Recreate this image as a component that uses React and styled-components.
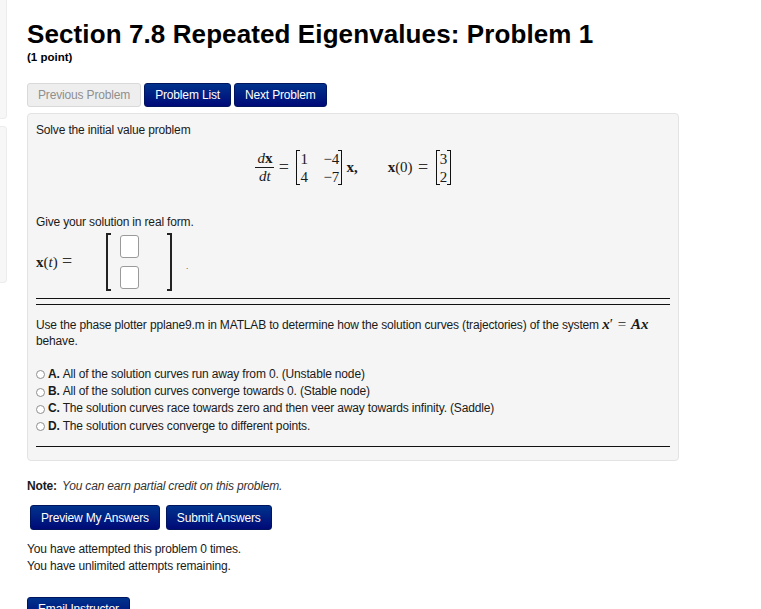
import React from "react";
import styled, { createGlobalStyle } from "styled-components";

const GlobalStyle = createGlobalStyle`
  html, body {
    margin: 0;
    padding: 0;
    height: 609px;
    overflow: hidden;
    background: #fff;
  }
  body {
    font-family: "Liberation Sans", Arial, sans-serif;
    font-size: 12px;
    letter-spacing: -0.16px;
    line-height: 17px;
    color: #1a1a1a;
  }
`;

const Page = styled.div`
  display: flex;
  align-items: flex-start;
`;

const Sidebar = styled.aside`
  width: 7px;
  flex: none;
  display: flex;
  flex-direction: column;
  gap: 7px;
  margin-top: -10px;
`;

const SideCard = styled.div`
  height: ${({ $h }) => $h}px;
  background: #f7f7f7;
  border: 1px solid #ececec;
  border-left: none;
  border-radius: 0 4px 4px 0;
  box-sizing: border-box;
`;

const Main = styled.main`
  width: 652px;
  margin-left: 20px;
  flex: none;
`;

const Title = styled.h1`
  margin: 19px 0 0;
  font-size: 26px;
  line-height: 30px;
  font-weight: 700;
  color: #000;
  letter-spacing: 0.1px;
`;

const Points = styled.div`
  margin-top: 1px;
  font-size: 11.5px;
  letter-spacing: 0;
  line-height: 15px;
  font-weight: 700;
  color: #000;
`;

const Nav = styled.div`
  display: flex;
  gap: 3px;
  margin-top: 18px;
`;

const Button = styled.button`
  height: 24px;
  padding: 0 10px;
  font-family: inherit;
  font-size: 12px;
  letter-spacing: inherit;
  line-height: 22px;
  color: #fff;
  background: linear-gradient(#00338c, #000a78);
  border: 1px solid #00155e;
  border-radius: 3px;
  box-sizing: border-box;
`;

const DisabledButton = styled(Button)`
  color: #8f8f8f;
  background: #eeeeee;
  border-color: #d9d9d9;
`;

const Well = styled.section`
  margin-top: 6px;
  height: 348px;
  box-sizing: border-box;
  padding: 8px 8px 0;
  background: #f5f5f5;
  border: 1px solid #e3e3e3;
  border-radius: 4px;
  display: flex;
  flex-direction: column;
`;

const Para = styled.p`
  margin: ${({ $top }) => $top || 0}px 0 0;
  line-height: ${({ $lh }) => $lh || 17}px;
`;

const InlineMath = styled.span`
  font-family: "Liberation Serif", "DejaVu Serif", serif;
  font-size: 15px;
  letter-spacing: 0;
  line-height: 0;
  word-spacing: 1px;
  color: #1a1a1a;
`;

const MathVar = styled.i`
  font-weight: 700;
`;

const Display = styled.div`
  margin-top: 10px;
  height: 36px;
  display: flex;
  align-items: center;
  justify-content: center;
  font-family: "Liberation Serif", "DejaVu Serif", serif;
  font-size: 15px;
  letter-spacing: 0;
  color: #1a1a1a;
`;

const Frac = styled.span`
  display: inline-flex;
  flex-direction: column;
  align-items: center;
  margin-right: 4px;
  line-height: 15px;
`;

const FracTop = styled.span`
  width: 19px;
  text-align: center;
  border-bottom: 1px solid #1a1a1a;
  padding-bottom: 1px;
`;

const FracBottom = styled.span`
  font-style: italic;
  padding-top: 1px;
`;

const Equals = styled.span`
  display: inline-block;
  width: 11px;
  margin-left: ${({ $left }) => $left || 0}px;
  font-size: 18px;
  line-height: 15px;
  text-align: center;
  color: #333;
`;

const Bracket = styled.span`
  display: inline-grid;
  grid-template-columns: ${({ $cols }) => $cols};
  row-gap: 4px;
  margin: 0 ${({ $right }) => $right || 0}px 0 7px;
  padding: 1px 2px 0 3px;
  line-height: 14px;
  border: 1px solid #111;
  box-sizing: border-box;
  border-image: linear-gradient(90deg, #111 0 4px, transparent 4px calc(100% - 4px), #111 calc(100% - 4px)) 1;
`;

const Cell = styled.span`
  text-align: ${({ $right }) => ($right ? "right" : "left")};
`;

const Italic = styled.i``;

const EquationGap = styled.span`
  width: 30px;
`;

const AnswerRow = styled.div`
  display: flex;
  align-items: center;
  margin-top: 2px;
  height: 58px;
`;

const AnswerLabel = styled.span`
  width: 70px;
  flex: none;
  font-family: "Liberation Serif", "DejaVu Serif", serif;
  font-size: 15px;
  letter-spacing: 0;
  color: #1a1a1a;
`;

const AnswerMatrix = styled.div`
  width: 66px;
  height: 58px;
  box-sizing: border-box;
  padding-left: 12px;
  display: flex;
  flex-direction: column;
  align-items: flex-start;
  justify-content: center;
  gap: 8px;
  border: 2px solid #222;
  border-image: linear-gradient(90deg, #222 0 5px, transparent 5px 61px, #222 61px) 2;
`;

const AnswerBox = styled.span`
  width: 19px;
  height: 23px;
  background: #fff;
  border: 1px solid #9a9a9a;
  border-radius: 3px;
  box-sizing: border-box;
`;

const Dot = styled.span`
  margin-left: 14px;
  margin-top: 8px;
  font-size: 8px;
`;

const Rule = styled.hr`
  width: 100%;
  margin: ${({ $top }) => $top}px 0 0;
  border: none;
  border-top: 1px solid #111;
`;

const Choices = styled.div`
  margin-top: 16.6px;
  display: flex;
  flex-direction: column;
`;

const Choice = styled.label`
  display: flex;
  align-items: center;
  height: 17.33px;
`;

const Radio = styled.span`
  width: 9px;
  height: 9px;
  margin: 1px 3px 0 0;
  background: #fff;
  border: 1px solid #8f8f8f;
  border-radius: 50%;
  box-sizing: border-box;
`;

const Key = styled.b`
  margin-right: 3px;
`;

const Note = styled.p`
  margin: 17px 0 0;
`;

const NoteText = styled.i`
  margin-left: 2px;
  letter-spacing: -0.18px;
  color: #333;
`;

const Actions = styled.div`
  display: flex;
  gap: 6px;
  margin: 10px 0 0 3px;
`;

const ActionButton = styled(Button)`
  height: 25px;
`;

const Attempts = styled.p`
  margin: 11px 0 0;
`;

const EmailButton = styled(Button)`
  display: block;
  margin-top: 22px;
`;

const choices = [
  ["A.", "All of the solution curves run away from 0. (Unstable node)"],
  ["B.", "All of the solution curves converge towards 0. (Stable node)"],
  ["C.", "The solution curves race towards zero and then veer away towards infinity. (Saddle)"],
  ["D.", "The solution curves converge to different points."],
];

export default function App() {
  return (
    <Page>
      <GlobalStyle />
      <Sidebar>
        <SideCard $h={129} />
        <SideCard $h={157} />
      </Sidebar>
      <Main>
        <Title>Section 7.8 Repeated Eigenvalues: Problem 1</Title>
        <Points>(1 point)</Points>
        <Nav>
          <DisabledButton disabled>Previous Problem</DisabledButton>
          <Button>Problem List</Button>
          <Button>Next Problem</Button>
        </Nav>
        <Well>
          <Para>Solve the initial value problem</Para>
          <Display>
            <Frac>
              <FracTop><Italic>d</Italic><b>x</b></FracTop>
              <FracBottom>dt</FracBottom>
            </Frac>
            <Equals>=</Equals>
            <Bracket $cols="15px 24px" $right={4}>
              <Cell>1</Cell><Cell $right>−4</Cell>
              <Cell>4</Cell><Cell $right>−7</Cell>
            </Bracket>
            <b>x,</b>
            <EquationGap />
            <b>x</b>(0)
            <Equals $left={5}>=</Equals>
            <Bracket $cols="8px">
              <Cell>3</Cell>
              <Cell>2</Cell>
            </Bracket>
          </Display>
          <Para $top={29}>Give your solution in real form.</Para>
          <AnswerRow>
            <AnswerLabel>
              <b>x</b>(<Italic>t</Italic>)<Equals $left={4}>=</Equals>
            </AnswerLabel>
            <AnswerMatrix>
              <AnswerBox />
              <AnswerBox />
            </AnswerMatrix>
            <Dot>.</Dot>
          </AnswerRow>
          <Rule $top={7} />
          <Rule $top={5} />
          <Para $top={12} $lh={16}>
            Use the phase plotter pplane9.m in MATLAB to determine how the solution curves (trajectories) of the system{" "}
            <InlineMath><MathVar>x</MathVar>′ = <MathVar>Ax</MathVar></InlineMath> behave.
          </Para>
          <Choices>
            {choices.map(([key, text]) => (
              <Choice key={key}>
                <Radio />
                <Key>{key}</Key>
                {text}
              </Choice>
            ))}
          </Choices>
          <Rule $top={11.4} />
        </Well>
        <Note>
          <b>Note:</b> <NoteText>You can earn partial credit on this problem.</NoteText>
        </Note>
        <Actions>
          <ActionButton>Preview My Answers</ActionButton>
          <ActionButton>Submit Answers</ActionButton>
        </Actions>
        <Attempts>
          You have attempted this problem 0 times.
          <br />
          You have unlimited attempts remaining.
        </Attempts>
        <EmailButton>Email Instructor</EmailButton>
      </Main>
    </Page>
  );
}
